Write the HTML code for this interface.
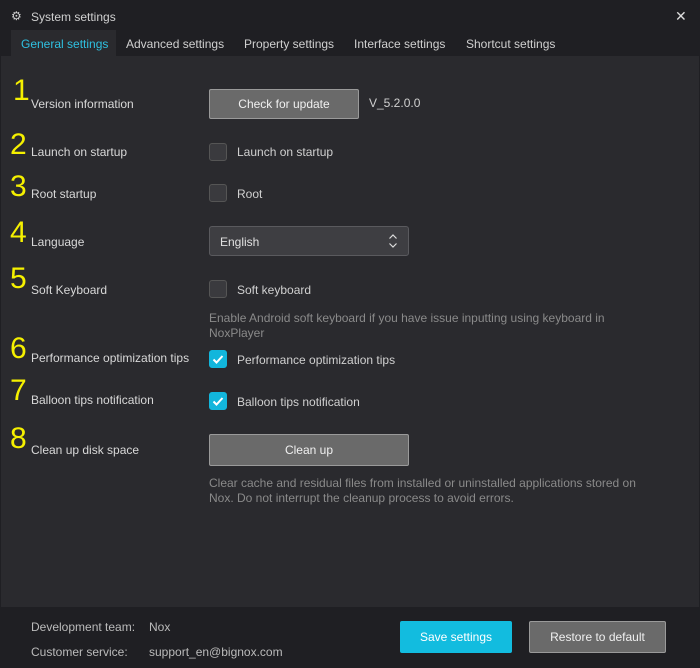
<!DOCTYPE html>
<html><head><meta charset="utf-8"><style>
*{margin:0;padding:0;box-sizing:border-box}
body{width:700px;height:668px;background:#1f1f23;font-family:"Liberation Sans",sans-serif;font-size:12px;color:#d0d0d0;position:relative;overflow:hidden}
.a{position:absolute;white-space:nowrap}
.panel{position:absolute;left:1px;top:56px;width:698px;height:551px;background:#2a2a2e}
.num{position:absolute;color:#f5f000;font-size:30px;line-height:30px}
.lbl{color:#d8d8d8}
.btn{position:absolute;background:#6a6a6a;border:1px solid #9a9a9a;border-radius:2px;color:#f0f0f0;text-align:center;font-size:12px}
.cb{position:absolute;width:18px;height:18px;border:1px solid #555;border-radius:3px;background:#3a3a3e}
.cb.on{background:#12b6dc;border-color:#12b6dc}
.desc{color:#8a8a8a;font-size:12px;line-height:15px;white-space:normal}
</style></head><body>
<div class="a" style="left:11px;top:9px;font-size:12px">⚙</div>
<div class="a" style="left:31px;top:10px;color:#d0d0d0">System settings</div>
<div class="a" style="left:675px;top:8px;font-size:14px;color:#ddd">✕</div>
<div class="a" style="left:11px;top:30px;width:105px;height:26px;background:#2a2a2e"></div>
<div class="a" style="left:21px;top:37px;color:#2fc0e0">General settings</div>
<div class="a" style="left:126px;top:37px">Advanced settings</div>
<div class="a" style="left:244px;top:37px">Property settings</div>
<div class="a" style="left:354px;top:37px">Interface settings</div>
<div class="a" style="left:466px;top:37px">Shortcut settings</div>
<div class="panel"></div>

<div class="num" style="left:13px;top:76px">1</div><div class="a lbl" style="left:31px;top:97px">Version information</div>
<div class="btn" style="left:209px;top:89px;width:150px;height:30px;line-height:28px">Check for update</div>
<div class="a" style="left:369px;top:96px">V_5.2.0.0</div>

<div class="num" style="left:10px;top:130px">2</div><div class="a lbl" style="left:31px;top:145px">Launch on startup</div>
<div class="cb" style="left:209px;top:143px"></div><div class="a" style="left:237px;top:145px">Launch on startup</div>

<div class="num" style="left:10px;top:172px">3</div><div class="a lbl" style="left:31px;top:187px">Root startup</div>
<div class="cb" style="left:209px;top:184px"></div><div class="a" style="left:237px;top:187px">Root</div>

<div class="num" style="left:10px;top:218px">4</div><div class="a lbl" style="left:31px;top:235px">Language</div>
<div class="a" style="left:209px;top:226px;width:200px;height:30px;background:#3e3e42;border:1px solid #5a5a5e;border-radius:3px"></div>
<div class="a" style="left:220px;top:235px;color:#e0e0e0">English</div>
<svg class="a" style="left:388px;top:233px" width="10" height="16" viewBox="0 0 10 16"><path d="M1.5 5.5L5 2l3.5 3.5M1.5 10.5L5 14l3.5-3.5" stroke="#ddd" stroke-width="1.2" fill="none"/></svg>

<div class="num" style="left:10px;top:264px">5</div><div class="a lbl" style="left:31px;top:283px">Soft Keyboard</div>
<div class="cb" style="left:209px;top:280px"></div><div class="a" style="left:237px;top:283px">Soft keyboard</div>
<div class="a desc" style="left:209px;top:311px;width:420px">Enable Android soft keyboard if you have issue inputting using keyboard in NoxPlayer</div>

<div class="num" style="left:10px;top:334px">6</div><div class="a lbl" style="left:31px;top:351px">Performance optimization tips</div>
<div class="cb on" style="left:209px;top:350px"><svg width="16" height="16" viewBox="0 0 16 16"><path d="M3.5 8.5l3 3 6-6.5" stroke="#fff" stroke-width="2" fill="none"/></svg></div>
<div class="a" style="left:237px;top:353px">Performance optimization tips</div>

<div class="num" style="left:10px;top:376px">7</div><div class="a lbl" style="left:31px;top:393px">Balloon tips notification</div>
<div class="cb on" style="left:209px;top:392px"><svg width="16" height="16" viewBox="0 0 16 16"><path d="M3.5 8.5l3 3 6-6.5" stroke="#fff" stroke-width="2" fill="none"/></svg></div>
<div class="a" style="left:237px;top:395px">Balloon tips notification</div>

<div class="num" style="left:10px;top:424px">8</div><div class="a lbl" style="left:31px;top:443px">Clean up disk space</div>
<div class="btn" style="left:209px;top:434px;width:200px;height:32px;line-height:30px">Clean up</div>
<div class="a desc" style="left:209px;top:476px;width:440px">Clear cache and residual files from installed or uninstalled applications stored on Nox. Do not interrupt the cleanup process to avoid errors.</div>

<div class="a" style="left:31px;top:620px;color:#bbb">Development team:</div>
<div class="a" style="left:149px;top:620px;color:#bbb">Nox</div>
<div class="a" style="left:31px;top:645px;color:#bbb">Customer service:</div>
<div class="a" style="left:149px;top:645px;color:#bbb">support_en@bignox.com</div>
<div class="a" style="left:400px;top:621px;width:112px;height:32px;background:#12bcdf;border-radius:2px;color:#fff;text-align:center;line-height:32px">Save settings</div>
<div class="btn" style="left:529px;top:621px;width:137px;height:32px;line-height:30px">Restore to default</div>
</body></html>
